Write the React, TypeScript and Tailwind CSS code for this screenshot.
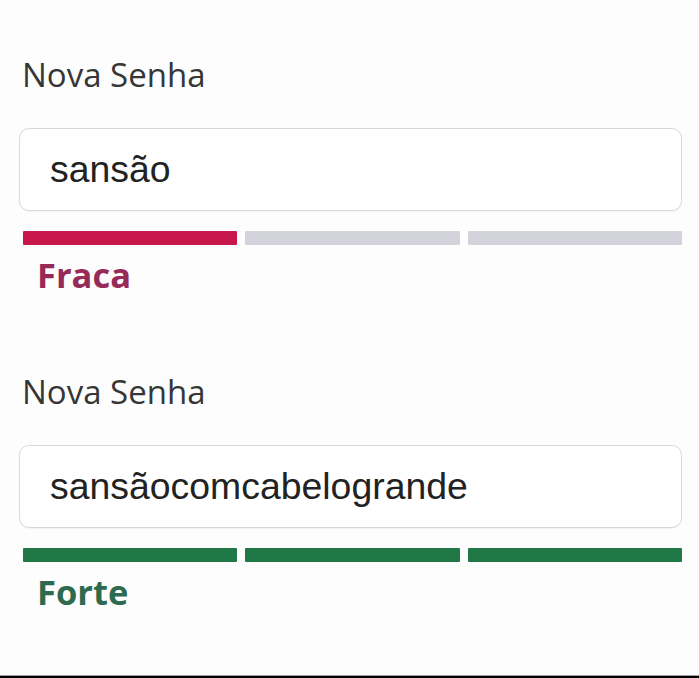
import React from 'react';

interface StrengthField {
  label: string;
  value: string;
  level: number;
  levelLabel: string;
  barColor: string;
  textColor: string;
}

const fields: StrengthField[] = [
  {
    label: 'Nova Senha',
    value: 'sansão',
    level: 1,
    levelLabel: 'Fraca',
    barColor: 'bg-[#c8184b]',
    textColor: 'text-[#962a58]',
  },
  {
    label: 'Nova Senha',
    value: 'sansãocomcabelogrande',
    level: 3,
    levelLabel: 'Forte',
    barColor: 'bg-[#1f7845]',
    textColor: 'text-[#2d6a4f]',
  },
];

const PasswordField = ({ field }: { field: StrengthField }) => (
  <div className="flex flex-col">
    <label className="pl-[3px] text-[33px] leading-[40px] font-medium text-[#363636] font-['Open_Sans',sans-serif]">
      {field.label}
    </label>
    <div className="mt-[33px] h-[83px] flex items-center rounded-[10px] border-[1.5px] border-[#d9d9d9] bg-white pl-[30px] shadow-[0_1px_1px_rgba(0,0,0,0.04)]">
      <span className="text-[37.4px] leading-none text-[#222] font-['Liberation_Sans',Arial,sans-serif]">
        {field.value}
      </span>
    </div>
    <div className="mt-[20px] ml-[4px] grid grid-cols-3 gap-[8px]">
      {[0, 1, 2].map((i) => (
        <div
          key={i}
          className={`h-[14px] rounded-[1px] ${i < field.level ? field.barColor : 'bg-[#d3d3db]'}`}
        />
      ))}
    </div>
    <span
      className={`mt-[10px] pl-[18px] text-[34.5px] leading-[40px] font-bold font-['Open_Sans',sans-serif] ${field.textColor}`}
    >
      {field.levelLabel}
    </span>
  </div>
);

const App = () => {
  return (
    <div className="min-h-screen flex flex-col bg-[#fdfdfd]">
      <div className="flex flex-col gap-[77px] pt-[55px] pl-[19px] pr-[17px]">
        {fields.map((f, i) => (
          <PasswordField key={i} field={f} />
        ))}
      </div>
      <div className="mt-auto h-[3px] border-t border-[#9a9a9a] bg-black" />
    </div>
  );
};

export default App;
